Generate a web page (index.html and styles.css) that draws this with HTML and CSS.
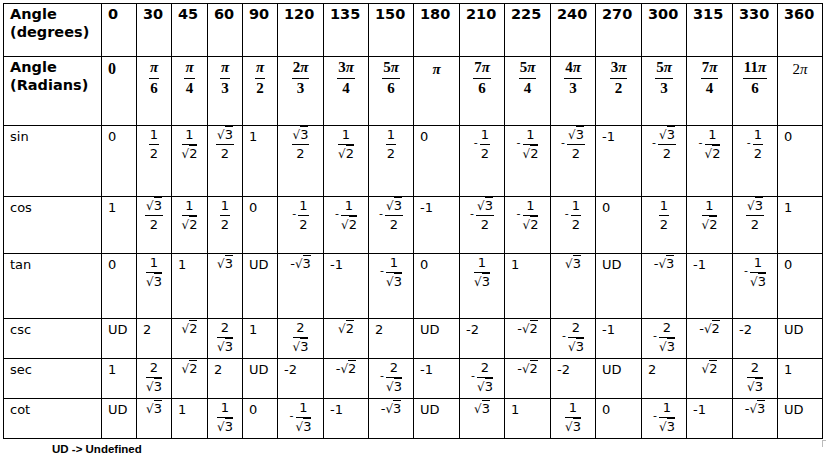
FILE: index.html
```html
<!DOCTYPE html>
<html>
<head>
<meta charset="utf-8">
<link rel="stylesheet" href="styles.css">
</head>
<body>
<div class="wrap">
<div class="grid">
  <div class="row r1">
    <div class="c h lbl">Angle<br>(degrees)</div>
    <div class="c h">0</div><div class="c h">30</div><div class="c h">45</div><div class="c h">60</div><div class="c h">90</div>
    <div class="c h">120</div><div class="c h">135</div><div class="c h">150</div><div class="c h">180</div><div class="c h">210</div>
    <div class="c h">225</div><div class="c h">240</div><div class="c h">270</div><div class="c h">300</div><div class="c h">315</div>
    <div class="c h">330</div><div class="c h">360</div>
  </div>
  <div class="row r2">
    <div class="c h lbl">Angle<br>(Radians)</div>
    <div class="c h hs">0</div>
    <div class="c m"><span class="rf"><span class="nu"><i>π</i></span><span class="de">6</span></span></div>
    <div class="c m"><span class="rf"><span class="nu"><i>π</i></span><span class="de">4</span></span></div>
    <div class="c m"><span class="rf"><span class="nu"><i>π</i></span><span class="de">3</span></span></div>
    <div class="c m"><span class="rf"><span class="nu"><i>π</i></span><span class="de">2</span></span></div>
    <div class="c m"><span class="rf"><span class="nu">2<i>π</i></span><span class="de">3</span></span></div>
    <div class="c m"><span class="rf"><span class="nu">3<i>π</i></span><span class="de">4</span></span></div>
    <div class="c m"><span class="rf"><span class="nu">5<i>π</i></span><span class="de">6</span></span></div>
    <div class="c m"><span class="rp"><i>π</i></span></div>
    <div class="c m"><span class="rf"><span class="nu">7<i>π</i></span><span class="de">6</span></span></div>
    <div class="c m"><span class="rf"><span class="nu">5<i>π</i></span><span class="de">4</span></span></div>
    <div class="c m"><span class="rf"><span class="nu">4<i>π</i></span><span class="de">3</span></span></div>
    <div class="c m"><span class="rf"><span class="nu">3<i>π</i></span><span class="de">2</span></span></div>
    <div class="c m"><span class="rf"><span class="nu">5<i>π</i></span><span class="de">3</span></span></div>
    <div class="c m"><span class="rf"><span class="nu">7<i>π</i></span><span class="de">4</span></span></div>
    <div class="c m"><span class="rf"><span class="nu">11<i>π</i></span><span class="de">6</span></span></div>
    <div class="c m"><span class="rp rp2">2<i>π</i></span></div>
  </div>
  <div class="row r3">
    <div class="c t">sin</div>
    <div class="c t">0</div>
    <div class="c m"><span class="fr"><span class="nu">1</span><span class="de">2</span></span></div>
    <div class="c m"><span class="fr"><span class="nu">1</span><span class="de"><span class="rad">√</span><span class="ov">2</span></span></span></div>
    <div class="c m"><span class="fr"><span class="nu"><span class="rad">√</span><span class="ov">3</span></span><span class="de">2</span></span></div>
    <div class="c t">1</div>
    <div class="c m"><span class="fr"><span class="nu"><span class="rad">√</span><span class="ov">3</span></span><span class="de">2</span></span></div>
    <div class="c m"><span class="fr"><span class="nu">1</span><span class="de"><span class="rad">√</span><span class="ov">2</span></span></span></div>
    <div class="c m"><span class="fr"><span class="nu">1</span><span class="de">2</span></span></div>
    <div class="c t">0</div>
    <div class="c m"><span class="ng">-</span><span class="fr"><span class="nu">1</span><span class="de">2</span></span></div>
    <div class="c m"><span class="ng">-</span><span class="fr"><span class="nu">1</span><span class="de"><span class="rad">√</span><span class="ov">2</span></span></span></div>
    <div class="c m"><span class="ng">-</span><span class="fr"><span class="nu"><span class="rad">√</span><span class="ov">3</span></span><span class="de">2</span></span></div>
    <div class="c t">-1</div>
    <div class="c m"><span class="ng">-</span><span class="fr"><span class="nu"><span class="rad">√</span><span class="ov">3</span></span><span class="de">2</span></span></div>
    <div class="c m"><span class="ng">-</span><span class="fr"><span class="nu">1</span><span class="de"><span class="rad">√</span><span class="ov">2</span></span></span></div>
    <div class="c m"><span class="ng">-</span><span class="fr"><span class="nu">1</span><span class="de">2</span></span></div>
    <div class="c t">0</div>
  </div>
  <div class="row r4">
    <div class="c t">cos</div>
    <div class="c t">1</div>
    <div class="c m"><span class="fr"><span class="nu"><span class="rad">√</span><span class="ov">3</span></span><span class="de">2</span></span></div>
    <div class="c m"><span class="fr"><span class="nu">1</span><span class="de"><span class="rad">√</span><span class="ov">2</span></span></span></div>
    <div class="c m"><span class="fr"><span class="nu">1</span><span class="de">2</span></span></div>
    <div class="c t">0</div>
    <div class="c m"><span class="ng">-</span><span class="fr"><span class="nu">1</span><span class="de">2</span></span></div>
    <div class="c m"><span class="ng">-</span><span class="fr"><span class="nu">1</span><span class="de"><span class="rad">√</span><span class="ov">2</span></span></span></div>
    <div class="c m"><span class="ng">-</span><span class="fr"><span class="nu"><span class="rad">√</span><span class="ov">3</span></span><span class="de">2</span></span></div>
    <div class="c t">-1</div>
    <div class="c m"><span class="ng">-</span><span class="fr"><span class="nu"><span class="rad">√</span><span class="ov">3</span></span><span class="de">2</span></span></div>
    <div class="c m"><span class="ng">-</span><span class="fr"><span class="nu">1</span><span class="de"><span class="rad">√</span><span class="ov">2</span></span></span></div>
    <div class="c m"><span class="ng">-</span><span class="fr"><span class="nu">1</span><span class="de">2</span></span></div>
    <div class="c t">0</div>
    <div class="c m"><span class="fr"><span class="nu">1</span><span class="de">2</span></span></div>
    <div class="c m"><span class="fr"><span class="nu">1</span><span class="de"><span class="rad">√</span><span class="ov">2</span></span></span></div>
    <div class="c m"><span class="fr"><span class="nu"><span class="rad">√</span><span class="ov">3</span></span><span class="de">2</span></span></div>
    <div class="c t">1</div>
  </div>
  <div class="row r5">
    <div class="c t">tan</div>
    <div class="c t">0</div>
    <div class="c m"><span class="fr"><span class="nu">1</span><span class="de"><span class="rad">√</span><span class="ov">3</span></span></span></div>
    <div class="c t">1</div>
    <div class="c m"><span class="sq"><span class="rad">√</span><span class="ov">3</span></span></div>
    <div class="c t">UD</div>
    <div class="c m"><span class="sq">-<span class="rad">√</span><span class="ov">3</span></span></div>
    <div class="c t">-1</div>
    <div class="c m"><span class="ng">-</span><span class="fr"><span class="nu">1</span><span class="de"><span class="rad">√</span><span class="ov">3</span></span></span></div>
    <div class="c t">0</div>
    <div class="c m"><span class="fr"><span class="nu">1</span><span class="de"><span class="rad">√</span><span class="ov">3</span></span></span></div>
    <div class="c t">1</div>
    <div class="c m"><span class="sq"><span class="rad">√</span><span class="ov">3</span></span></div>
    <div class="c t">UD</div>
    <div class="c m"><span class="sq">-<span class="rad">√</span><span class="ov">3</span></span></div>
    <div class="c t">-1</div>
    <div class="c m"><span class="ng">-</span><span class="fr"><span class="nu">1</span><span class="de"><span class="rad">√</span><span class="ov">3</span></span></span></div>
    <div class="c t">0</div>
  </div>
  <div class="row r6">
    <div class="c t">csc</div>
    <div class="c t">UD</div>
    <div class="c t">2</div>
    <div class="c m"><span class="sq"><span class="rad">√</span><span class="ov">2</span></span></div>
    <div class="c m"><span class="fr"><span class="nu">2</span><span class="de"><span class="rad">√</span><span class="ov">3</span></span></span></div>
    <div class="c t">1</div>
    <div class="c m"><span class="fr"><span class="nu">2</span><span class="de"><span class="rad">√</span><span class="ov">3</span></span></span></div>
    <div class="c m"><span class="sq"><span class="rad">√</span><span class="ov">2</span></span></div>
    <div class="c t">2</div>
    <div class="c t">UD</div>
    <div class="c t">-2</div>
    <div class="c m"><span class="sq">-<span class="rad">√</span><span class="ov">2</span></span></div>
    <div class="c m"><span class="ng">-</span><span class="fr"><span class="nu">2</span><span class="de"><span class="rad">√</span><span class="ov">3</span></span></span></div>
    <div class="c t">-1</div>
    <div class="c m"><span class="ng">-</span><span class="fr"><span class="nu">2</span><span class="de"><span class="rad">√</span><span class="ov">3</span></span></span></div>
    <div class="c m"><span class="sq">-<span class="rad">√</span><span class="ov">2</span></span></div>
    <div class="c t">-2</div>
    <div class="c t">UD</div>
  </div>
  <div class="row r7">
    <div class="c t">sec</div>
    <div class="c t">1</div>
    <div class="c m"><span class="fr"><span class="nu">2</span><span class="de"><span class="rad">√</span><span class="ov">3</span></span></span></div>
    <div class="c m"><span class="sq"><span class="rad">√</span><span class="ov">2</span></span></div>
    <div class="c t">2</div>
    <div class="c t">UD</div>
    <div class="c t">-2</div>
    <div class="c m"><span class="sq">-<span class="rad">√</span><span class="ov">2</span></span></div>
    <div class="c m"><span class="ng">-</span><span class="fr"><span class="nu">2</span><span class="de"><span class="rad">√</span><span class="ov">3</span></span></span></div>
    <div class="c t">-1</div>
    <div class="c m"><span class="ng">-</span><span class="fr"><span class="nu">2</span><span class="de"><span class="rad">√</span><span class="ov">3</span></span></span></div>
    <div class="c m"><span class="sq">-<span class="rad">√</span><span class="ov">2</span></span></div>
    <div class="c t">-2</div>
    <div class="c t">UD</div>
    <div class="c t">2</div>
    <div class="c m"><span class="sq"><span class="rad">√</span><span class="ov">2</span></span></div>
    <div class="c m"><span class="fr"><span class="nu">2</span><span class="de"><span class="rad">√</span><span class="ov">3</span></span></span></div>
    <div class="c t">1</div>
  </div>
  <div class="row r8">
    <div class="c t">cot</div>
    <div class="c t">UD</div>
    <div class="c m"><span class="sq"><span class="rad">√</span><span class="ov">3</span></span></div>
    <div class="c t">1</div>
    <div class="c m"><span class="fr"><span class="nu">1</span><span class="de"><span class="rad">√</span><span class="ov">3</span></span></span></div>
    <div class="c t">0</div>
    <div class="c m"><span class="ng">-</span><span class="fr"><span class="nu">1</span><span class="de"><span class="rad">√</span><span class="ov">3</span></span></span></div>
    <div class="c t">-1</div>
    <div class="c m"><span class="sq">-<span class="rad">√</span><span class="ov">3</span></span></div>
    <div class="c t">UD</div>
    <div class="c m"><span class="sq"><span class="rad">√</span><span class="ov">3</span></span></div>
    <div class="c t">1</div>
    <div class="c m"><span class="fr"><span class="nu">1</span><span class="de"><span class="rad">√</span><span class="ov">3</span></span></span></div>
    <div class="c t">0</div>
    <div class="c m"><span class="ng">-</span><span class="fr"><span class="nu">1</span><span class="de"><span class="rad">√</span><span class="ov">3</span></span></span></div>
    <div class="c t">-1</div>
    <div class="c m"><span class="sq">-<span class="rad">√</span><span class="ov">3</span></span></div>
    <div class="c t">UD</div>
  </div>
</div>
<div class="note">UD -&gt; Undefined</div>
<span class="mark"></span>
</div>
</body>
</html>
```
FILE: styles.css
```css
html, body {
  margin: 0;
  padding: 0;
  background: #fff;
}
body {
  color: #000;
  font-family: "DejaVu Sans", Verdana, sans-serif;
  font-size: 13px;
}
.wrap {
  position: relative;
  width: 826px;
  height: 457px;
  padding: 3px 0 0 3px;
  box-sizing: border-box;
}
.grid {
  display: grid;
  width: max-content;
  grid-template-columns: 98px 35px 35px 36px 35px 35px 46px 45px 45px 46px 45px 46px 45px 46px 45px 46px 45px 45px;
  grid-template-rows: 53px 69px 71px 57px 65px 40px 40px 40px;
  border-left: 1px solid #000;
  border-top: 1px solid #000;
}
.row { display: contents; }
.c {
  border-right: 1px solid #000;
  border-bottom: 1px solid #000;
  overflow: hidden;
  white-space: nowrap;
}
.h {
  font-weight: bold;
  font-size: 14.5px;
  line-height: 18px;
  padding: 1px 0 0 6px;
}
.hs {
  font-family: "Liberation Serif", "DejaVu Serif", serif;
  font-size: 16px;
  padding-top: 3px;
}
.t {
  line-height: 16px;
  padding: 3px 0 0 6px;
}
.m {
  text-align: center;
  padding-top: 2px;
  line-height: 14px;
}
.fr, .rf {
  display: inline-grid;
  vertical-align: top;
  text-align: center;
}
.fr .nu {
  border-bottom: 1px solid #000;
  padding: 0 1px 2px;
}
.fr .de {
  padding-top: 2px;
}
.rf {
  font-family: "Liberation Serif", "DejaVu Serif", serif;
  font-weight: bold;
  font-size: 15px;
  line-height: 15px;
  padding-top: 1px;
}
.rf .nu {
  border-bottom: 1px solid #000;
  padding: 0 1px 3px;
}
.rf .de {
  padding-top: 2px;
}
.rp {
  display: inline-block;
  font-family: "Liberation Serif", "DejaVu Serif", serif;
  font-weight: bold;
  font-size: 15px;
  line-height: 15px;
  padding-top: 3px;
}
.rp2 { font-weight: normal; }
.ng {
  display: inline-block;
  vertical-align: top;
  font-size: 11px;
  padding-top: 8px;
  margin-right: 2px;
}
.sq {
  display: inline-block;
  vertical-align: top;
  padding-top: 1px;
}
.rad {
  font-size: 12px;
}
.ov {
  border-top: 1px solid #000;
  line-height: 14px;
}
.note {
  font-family: "Liberation Sans", Arial, sans-serif;
  font-weight: bold;
  font-size: 11.5px;
  line-height: 13px;
  margin: 4px 0 0 49px;
}
.mark {
  position: absolute;
  left: 822px;
  top: 440px;
  width: 4px;
  height: 6px;
  border-left: 1px solid #bbb;
  border-top: 1px solid #bbb;
}
```
